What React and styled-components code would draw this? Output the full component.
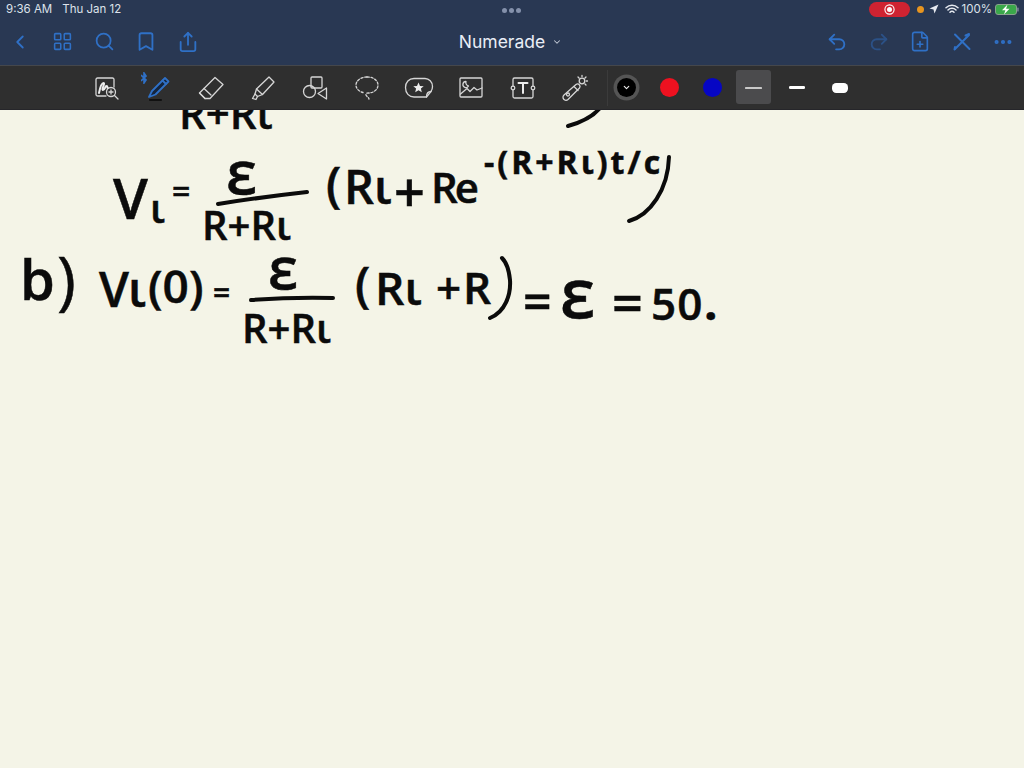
import React from 'react';
import styled, { createGlobalStyle } from 'styled-components';
import { ChevronLeft, ChevronDown, LayoutGrid, Search, Bookmark, Share, Undo2, Redo2, FilePlus, Ellipsis } from 'lucide-react';

const GlobalStyle = createGlobalStyle`
  html, body { margin: 0; padding: 0; background: #f4f4e7; }
  body { font-family: Inter, "Liberation Sans", sans-serif; }
`;

const Page = styled.div`
  width: 1024px;
  height: 768px;
  display: flex;
  flex-direction: column;
  overflow: hidden;
`;

const TopArea = styled.header`
  background: #293853;
  height: 65px;
  flex: none;
  display: flex;
  flex-direction: column;
`;

const StatusBar = styled.div`
  height: 18px;
  padding: 0 5px 0 6px;
  box-sizing: border-box;
  display: grid;
  grid-template-columns: 1fr auto 1fr;
  align-items: center;
  color: #dde2ea;
  font-size: 11.5px;
`;

const StatusLeft = styled.div`
  display: flex;
  gap: 10px;
`;

const Dots = styled.div`
  display: flex;
  gap: 2px;
  margin: 3px 2px 0 0;
`;

const Dot = styled.span`
  width: 5px;
  height: 5px;
  border-radius: 50%;
  background: #8491ab;
`;

const StatusRight = styled.div`
  display: flex;
  justify-content: flex-end;
  align-items: center;
`;

const RecordPill = styled.div`
  width: 41px;
  height: 15px;
  border-radius: 8px;
  background: #cf2331;
  display: flex;
  align-items: center;
  justify-content: center;
  margin-right: 7px;
`;

const OrangeDot = styled.span`
  width: 7px;
  height: 7px;
  border-radius: 50%;
  background: #e8951f;
  margin-right: 5px;
`;

const LocationSvg = styled.svg`
  margin-right: 6px;
`;

const Percent = styled.span`
  margin: 0 3px 0 3px;
  font-size: 11.5px;
`;

const NavBar = styled.nav`
  flex: 1;
  display: grid;
  grid-template-columns: 1fr auto 1fr;
  align-items: center;
  padding: 0 10px 0 9px;
  color: #2f70c6;
`;

const NavGroup = styled.div`
  display: flex;
  gap: ${(p) => p.$gap}px;
  justify-content: ${(p) => (p.$end ? 'flex-end' : 'flex-start')};
`;

const NavIcon = styled.span`
  width: 22px;
  height: 22px;
  display: flex;
  align-items: center;
  justify-content: center;
  opacity: ${(p) => (p.$dim ? 0.45 : 1)};
`;

const Title = styled.div`
  display: flex;
  align-items: center;
  gap: 7px;
  color: #e9eef6;
  font-size: 17.5px;
  font-weight: 400;
  margin-right: 2px;
`;

const Toolbar = styled.div`
  height: 45px;
  flex: none;
  box-sizing: border-box;
  background: #2f2f2f;
  border-top: 1px solid #45474b;
  border-bottom: 1px solid #26262a;
  display: flex;
  align-items: center;
  padding-left: 81px;
`;

const ToolCell = styled.div`
  width: 52px;
  height: 100%;
  display: flex;
  align-items: center;
  justify-content: center;
  position: relative;
`;

const Bluetooth = styled.span`
  position: absolute;
  left: 8px;
  top: 6px;
  color: #2f70c6;
  line-height: 0;
`;

const Divider = styled.div`
  width: 1px;
  height: 36px;
  background: #3b3b3b;
  margin: 0 -3px 0 6px;
`;

const SwatchCell = styled.div`
  width: 43px;
  display: flex;
  align-items: center;
  justify-content: center;
`;

const Swatch = styled.span`
  width: 19px;
  height: 19px;
  border-radius: 50%;
  background: ${(p) => p.$color};
  display: flex;
  align-items: center;
  justify-content: center;
  box-shadow: ${(p) => (p.$active ? '0 0 0 3.5px #555' : 'none')};
  color: #eee;
`;

const WidthGroup = styled.div`
  display: flex;
  height: 100%;
  margin-left: -2px;
`;

const WidthCell = styled.div`
  width: 43px;
  height: 100%;
  display: flex;
  align-items: center;
  justify-content: center;
  position: relative;
  &::before {
    content: '';
    display: ${(p) => (p.$active ? 'block' : 'none')};
    position: absolute;
    left: 4px;
    right: 4px;
    top: 4px;
    bottom: 5px;
    background: #4b4b4d;
    border-radius: 3px;
  }
`;

const WidthBar = styled.span`
  position: relative;
  width: ${(p) => p.$w}px;
  height: ${(p) => p.$h}px;
  border-radius: ${(p) => p.$h / 2.4}px;
  background: ${(p) => (p.$active ? '#c9c9c9' : '#fff')};
`;

const Canvas = styled.main`
  position: relative;
  flex: 1;
  overflow: hidden;
  background: #f4f4e7;
`;

const Ink = styled.span`
  position: absolute;
  left: ${(p) => p.$x}px;
  top: ${(p) => p.$y - 110}px;
  font-family: "Open Sans", "DejaVu Sans", sans-serif;
  font-size: ${(p) => p.$size}px;
  font-weight: ${(p) => p.$weight || 600};
  line-height: 1;
  color: #0b0b0b;
  white-space: pre;
  letter-spacing: ${(p) => p.$track || 0}px;
  -webkit-text-stroke: 0.5px #0b0b0b;
`;

const Strokes = styled.svg`
  position: absolute;
  left: 0;
  top: 0;
  width: 1024px;
  height: 658px;
  fill: none;
  stroke: #0b0b0b;
  stroke-width: 4;
  stroke-linecap: round;
  stroke-linejoin: round;
`;

const ToolSvg = ({ children, w = 28, h = 28, box = '0 0 28 28' }) => (
  <svg width={w} height={h} viewBox={box} fill="none" stroke="#d6d6d6" strokeWidth="1.3" strokeLinecap="round" strokeLinejoin="round">
    {children}
  </svg>
);

const LensIcon = () => (
  <ToolSvg>
    <path d="M21 13V5.500A1.500 1.500 0 0 0 19.500 4H4.500A1.500 1.500 0 0 0 3 5.500V20.500A1.500 1.500 0 0 0 4.500 22H13" />
    <path d="M6 19c1-5 2.500-10 4.500-10s-2.500 7-.5 7 2-4 3.500-4 .5 2.500 1.500 2" strokeWidth="2" stroke="#eee" />
    <circle cx="18" cy="18" r="4.500" />
    <path d="M21.500 21.500 25 25M16 18h4M18 16v4" />
  </ToolSvg>
);

const PenIcon = () => (
  <ToolSvg>
    <path d="M4 23 7 17 20 4l3.500 3.500L10.500 20.500 4 23Z" fill="#15253d" stroke="#2f70c6" strokeWidth="1.800" />
    <path d="M17.500 6.500 21 10" stroke="#2f70c6" strokeWidth="1.800" />
    <path d="M5 26h11" stroke="#111" strokeWidth="2" />
  </ToolSvg>
);

const EraserIcon = () => (
  <ToolSvg>
    <path d="M18 3.500 26 10.500 13 24.500H8L2.500 19 18 3.500Z" />
    <path d="M7 14.500 14 21" />
    <path d="M2.500 19 8 24.500" />
  </ToolSvg>
);

const MarkerIcon = () => (
  <ToolSvg>
    <path d="M20 3 25 8 13.500 20.500 7.500 15 20 3Z" />
    <path d="M7.500 15 6 20 8.500 22.500 13.500 20.500" />
    <path d="M6 20 3.500 24.500 7 25.500 8.500 22.500" />
  </ToolSvg>
);

const ShapesIcon = () => (
  <ToolSvg>
    <rect x="10" y="3" width="11" height="11" rx="1" />
    <circle cx="8.500" cy="17.500" r="6" />
    <path d="M25.500 14 17 19.500 25.500 25V14Z" />
  </ToolSvg>
);

const LassoIcon = () => (
  <ToolSvg>
    <path d="M14 3c6.500 0 11 3.500 11 8s-4.500 8-9.500 8c-1.500 0-3 .5-2.500 2s2.500 2 3 4" strokeDasharray="2.200 1.800" />
    <path d="M14 3C8 3 3 6.500 3 11c0 3.500 3 6.500 7 7.500" strokeDasharray="2.200 1.800" />
  </ToolSvg>
);

const StickerIcon = () => (
  <ToolSvg box="0 0 30 24" w={30} h={24}>
    <path d="M10 2.500h11c4 0 7.500 3.500 7.500 8 0 2-.5 3.500-1.500 5l-4.500 5.500H10c-5 0-8.500-4-8.500-9.500S5 2.500 10 2.500Z" />
    <path d="M22.500 21c0-3 1-5.500 4.500-5.500" />
    <path d="m14.500 6.500 1.500 3.400 3.700.3-2.800 2.400.9 3.600-3.300-2-3.300 2 .9-3.600-2.800-2.400 3.700-.3Z" fill="#eee" stroke="none" />
  </ToolSvg>
);

const ImageIcon = () => (
  <ToolSvg w={26} h={24} box="0 0 26 24">
    <rect x="2" y="2" width="22" height="19" rx="1" />
    <path d="M2.500 18 9 12.500l3 3 4-4 3 2.500 5-2" />
    <path d="M8 5.500a3 3 0 1 0 2.500 4.500A3.500 3.500 0 0 1 8 5.500Z" />
  </ToolSvg>
);

const TextIcon = () => (
  <ToolSvg w={26} h={24} box="0 0 26 24">
    <path d="M3 10V3.500A1.500 1.500 0 0 1 4.500 2h17A1.500 1.500 0 0 1 23 3.500V10M3 14v6.500A1.500 1.500 0 0 0 4.500 22h17a1.500 1.500 0 0 0 1.500-1.500V14" />
    <circle cx="3" cy="12" r="1.800" />
    <circle cx="23" cy="12" r="1.800" />
    <path d="M8.500 7h9M13 7v10" stroke="#eee" strokeWidth="2" />
  </ToolSvg>
);

const LaserIcon = () => (
  <ToolSvg>
    <path d="M3 21 15 10.500a2.500 2.500 0 0 1 3.500 3.500L7 25.500a2.800 2.800 0 0 1-4-4.500Z" />
    <path d="M13 12.500 17 16.500" />
    <circle cx="7" cy="20.500" r="1.500" />
    <circle cx="21" cy="7" r="2.800" />
    <path d="M21 1.500v1.200M26.500 7h-1.200M25 3l-1 1M25 11l-1-1M17 3l1 1" />
  </ToolSvg>
);

const CrossedTools = () => (
  <svg width="20" height="20" viewBox="0 0 20 20" fill="none" stroke="currentColor" strokeWidth="2" strokeLinecap="round">
    <path d="M3 2.500 17.500 17M17 3 3 17" />
    <path d="M13.500 3.500 17 2M3 15l-.5 2.500" />
  </svg>
);

const Wifi = () => (
  <svg width="14" height="11" viewBox="0 0 14 11" fill="none" stroke="#e6eaf0" strokeWidth="1.500" strokeLinecap="round">
    <path d="M1 3.800a8.500 8.500 0 0 1 12 0M3 6a5.600 5.600 0 0 1 8 0M5 8.200a2.800 2.800 0 0 1 4 0" />
  </svg>
);

const LocationArrow = () => (
  <LocationSvg width="10" height="10" viewBox="0 0 10 10" fill="#e6eaf0">
    <path d="M9.500.5 5.500 9.500 4.500 5.500.5 4.500Z" />
  </LocationSvg>
);

const BatteryIcon = () => (
  <svg width="24" height="11" viewBox="0 0 24 11">
    <rect x=".5" y=".5" width="21" height="10" rx="2.500" fill="#3aa84a" stroke="#8aa18e" />
    <rect x="22.300" y="3.500" width="1.300" height="4" rx=".6" fill="#8a95a5" />
    <path d="M12.500.5 7 6.200h3.400L9 10.500l5.500-5.700h-3.400Z" fill="#fff" />
  </svg>
);

const RecordIcon = () => (
  <svg width="11" height="11" viewBox="0 0 11 11">
    <circle cx="5.500" cy="5.500" r="4.600" fill="none" stroke="#fff" strokeWidth="1.100" />
    <circle cx="5.500" cy="5.500" r="2.500" fill="#fff" />
  </svg>
);

const tools = [
  { id: 'lens', icon: <LensIcon /> },
  { id: 'pen', icon: <PenIcon />, bluetooth: true },
  { id: 'eraser', icon: <EraserIcon /> },
  { id: 'marker', icon: <MarkerIcon /> },
  { id: 'shapes', icon: <ShapesIcon /> },
  { id: 'lasso', icon: <LassoIcon /> },
  { id: 'sticker', icon: <StickerIcon /> },
  { id: 'image', icon: <ImageIcon /> },
  { id: 'text', icon: <TextIcon /> },
  { id: 'laser', icon: <LaserIcon /> },
];

// handwriting on the page: x, top of line, font size
const inkTexts = [
  { t: 'R+Rι', x: 179, y: 92, size: 42 },
  { t: 'V', x: 113, y: 169, size: 56 },
  { t: 'ι', x: 150, y: 188, size: 40 },
  { t: '=', x: 172, y: 175, size: 32 },
  { t: 'ε', x: 226, y: 141, size: 60 },
  { t: 'R+Rι', x: 202, y: 205, size: 40 },
  { t: '(', x: 326, y: 160, size: 48 },
  { t: 'Rι', x: 344, y: 163, size: 47 },
  { t: '+', x: 394, y: 164, size: 54 },
  { t: 'Re', x: 431, y: 166, size: 42, track: -3 },
  { t: '-(R+Rι)t/c', x: 484, y: 146, size: 32, weight: 700, track: 3 },
  { t: 'b', x: 20, y: 250, size: 56 },
  { t: ')', x: 57, y: 247, size: 64, weight: 500 },
  { t: 'Vι', x: 99, y: 265, size: 48, track: -1 },
  { t: '(0)', x: 148, y: 262, size: 46 },
  { t: '=', x: 213, y: 278, size: 30 },
  { t: 'ε', x: 268, y: 238, size: 58 },
  { t: 'R+Rι', x: 242, y: 308, size: 40 },
  { t: '(', x: 355, y: 260, size: 48 },
  { t: 'Rι', x: 375, y: 264, size: 46 },
  { t: '+', x: 436, y: 265, size: 44 },
  { t: 'R', x: 463, y: 265, size: 44 },
  { t: '=', x: 523, y: 276, size: 50 },
  { t: 'ε', x: 560, y: 258, size: 68 },
  { t: '=', x: 612, y: 275, size: 54 },
  { t: '50', x: 651, y: 281, size: 44, track: 1 },
  { t: '.', x: 705, y: 285, size: 40, weight: 800 },
];

const App = () => (
  <Page>
    <GlobalStyle />
    <TopArea>
      <StatusBar>
        <StatusLeft>
          <span>9:36 AM</span>
          <span>Thu Jan 12</span>
        </StatusLeft>
        <Dots>
          <Dot />
          <Dot />
          <Dot />
        </Dots>
        <StatusRight>
          <RecordPill>
            <RecordIcon />
          </RecordPill>
          <OrangeDot />
          <LocationArrow />
          <Wifi />
          <Percent>100%</Percent>
          <BatteryIcon />
        </StatusRight>
      </StatusBar>
      <NavBar>
        <NavGroup $gap={20}>
          <NavIcon><ChevronLeft size={26} strokeWidth={2} /></NavIcon>
          <NavIcon><LayoutGrid size={21} strokeWidth={1.8} /></NavIcon>
          <NavIcon><Search size={21} strokeWidth={2} /></NavIcon>
          <NavIcon><Bookmark size={23} strokeWidth={2} /></NavIcon>
          <NavIcon><Share size={22} strokeWidth={2} /></NavIcon>
        </NavGroup>
        <Title>
          Numerade
          <ChevronDown size={10} strokeWidth={2.5} color="#c3cad6" />
        </Title>
        <NavGroup $gap={19.5} $end>
          <NavIcon><Undo2 size={22} strokeWidth={2} /></NavIcon>
          <NavIcon $dim><Redo2 size={22} strokeWidth={2} /></NavIcon>
          <NavIcon><FilePlus size={23} strokeWidth={1.8} /></NavIcon>
          <NavIcon><CrossedTools /></NavIcon>
          <NavIcon><Ellipsis size={22} strokeWidth={2.5} /></NavIcon>
        </NavGroup>
      </NavBar>
    </TopArea>
    <Toolbar>
      {tools.map((tool) => (
        <ToolCell key={tool.id}>
          {tool.bluetooth && (
            <Bluetooth>
              <svg width="6" height="12" viewBox="0 0 6 12" fill="none" stroke="currentColor" strokeWidth="1.600">
                <path d="M0 3 5 8 3 11V1l2 3-5 5" />
              </svg>
            </Bluetooth>
          )}
          {tool.icon}
        </ToolCell>
      ))}
      <Divider />
      <SwatchCell>
        <Swatch $color="#000" $active>
          <ChevronDown size={9} strokeWidth={3} />
        </Swatch>
      </SwatchCell>
      <SwatchCell><Swatch $color="#ee1120" /></SwatchCell>
      <SwatchCell><Swatch $color="#0606c4" /></SwatchCell>
      <WidthGroup>
        <WidthCell $active><WidthBar $w={17} $h={2} $active /></WidthCell>
        <WidthCell><WidthBar $w={16} $h={3} /></WidthCell>
        <WidthCell><WidthBar $w={16} $h={10} /></WidthCell>
      </WidthGroup>
    </Toolbar>
    <Canvas>
      {inkTexts.map((ink, i) => (
        <Ink key={i} $x={ink.x} $y={ink.y} $size={ink.size} $weight={ink.weight} $track={ink.track}>
          {ink.t}
        </Ink>
      ))}
      {/* fraction bars and the long closing brackets are pen strokes */}
      <Strokes viewBox="0 110 1024 658">
        <path d="M218 204Q262 197 307 192" />
        <path d="M251 300Q292 297 333 298" />
        <path d="M568 126Q590 120 600 108" />
        <path d="M629 221C650 215 668 190 669 157" />
        <path d="M490 318C505 312 511 295 510 280C509 270 506 262 502 258" />
      </Strokes>
    </Canvas>
  </Page>
);

export default App;
